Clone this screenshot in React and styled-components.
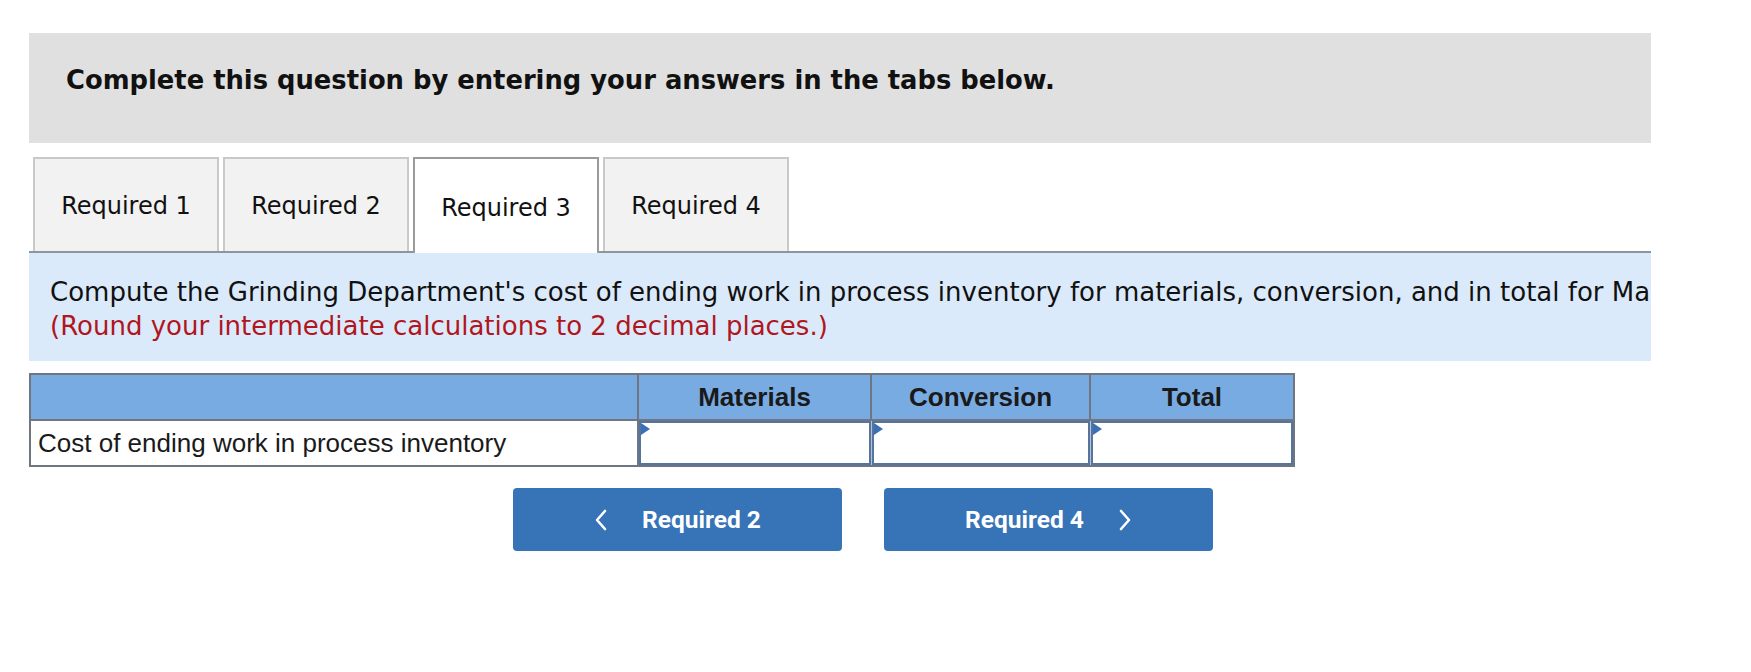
import React from "react";
import styled, { createGlobalStyle } from "styled-components";

const GlobalStyle = createGlobalStyle`
  html, body { margin: 0; padding: 0; background: #ffffff; }
  * { box-sizing: border-box; }
`;

const Page = styled.div`
  width: 1751px;
  padding: 33px 0 0 29px;
`;

const Frame = styled.div`
  width: 1622px;
`;

const Banner = styled.div`
  height: 110px;
  background: #e0e0e0;
  padding: 32px 0 0 37px;
  font-family: "DejaVu Sans", Verdana, sans-serif;
  font-weight: bold;
  font-size: 25.8px;
  line-height: 30px;
  color: #111;
  white-space: nowrap;
`;

const TabBar = styled.div`
  margin-top: 14px;
  display: flex;
  gap: 4px;
  padding-left: 4px;
  height: 96px;
  border-bottom: 2px solid #8f959b;
`;

const Tab = styled.div`
  width: 186px;
  height: ${(p) => (p.$active ? "96px" : "94px")};
  display: flex;
  align-items: center;
  justify-content: center;
  padding-top: ${(p) => (p.$active ? "4px" : "2px")};
  background: ${(p) => (p.$active ? "#ffffff" : "#f2f2f2")};
  border: 2px solid ${(p) => (p.$active ? "#9a9a9a" : "#c9c9c9")};
  border-bottom: none;
  font-family: "DejaVu Sans", Verdana, sans-serif;
  font-size: 24px;
  color: #111;
  position: relative;
  z-index: ${(p) => (p.$active ? 1 : 0)};
`;

const Info = styled.div`
  height: 108px;
  background: #dbeafa;
  padding: 22px 0 0 21px;
  overflow: hidden;
  white-space: nowrap;
  font-family: "DejaVu Sans", Verdana, sans-serif;
  font-size: 26px;
  line-height: 34px;
  color: #111;
`;

const Note = styled.div`
  color: #b0161d;
`;

const Table = styled.table`
  margin-top: 12px;
  border-collapse: collapse;
  width: 1264px;
  table-layout: fixed;
  border: 2px solid #6e7480;
  font-family: "Liberation Sans", Arial, sans-serif;
`;

const HeadCell = styled.th`
  height: 46px;
  background: #79abe3;
  border: 2px solid #6f7681;
  font-size: 26px;
  font-weight: bold;
  color: #1a1a1a;
  text-align: center;
  padding: 0;
`;

const LabelCell = styled.td`
  height: 46px;
  border: 2px solid #6f7681;
  padding: 1px 0 0 7px;
  font-size: 26px;
  color: #1a1a1a;
`;

const InputCell = styled.td`
  height: 46px;
  padding: 0;
  border: 1px solid #b9c2cc;
  border-top: 2px solid #6f7681;
`;

const InputBox = styled.div`
  position: relative;
  height: 44px;
  border: 2px solid #55759f;
  background: #fff;
`;

const Marker = styled.span`
  position: absolute;
  left: 0;
  top: 0;
  width: 0;
  height: 0;
  border-top: 6px solid transparent;
  border-bottom: 6px solid transparent;
  border-left: 9px solid #3b70b7;
`;

const Nav = styled.div`
  margin: 21px 0 0 484px;
  display: flex;
  gap: 42px;
`;

const NavButton = styled.button`
  width: 329px;
  height: 63px;
  border: none;
  border-radius: 4px;
  background: #3773b7;
  color: #fff;
  font-family: Roboto, "Liberation Sans", sans-serif;
  font-weight: bold;
  font-size: 24.5px;
  display: flex;
  align-items: center;
  justify-content: center;
  gap: 34px;
  padding: 0;
  cursor: pointer;
`;

const Chevron = ({ dir }) => (
  <svg width="14" height="24" viewBox="0 0 14 24" fill="none">
    <polyline
      points={dir === "left" ? "11,3 3,12 11,21" : "3,3 11,12 3,21"}
      stroke="#fff"
      strokeWidth="2.6"
      strokeLinecap="round"
      strokeLinejoin="round"
    />
  </svg>
);

const tabs = ["Required 1", "Required 2", "Required 3", "Required 4"];

export default function App() {
  return (
    <>
      <GlobalStyle />
      <Page>
        <Frame>
          <Banner>Complete this question by entering your answers in the tabs below.</Banner>
          <TabBar>
            {tabs.map((t, i) => (
              <Tab key={t} $active={i === 2}>
                {t}
              </Tab>
            ))}
          </TabBar>
          <Info>
            <div>
              Compute the Grinding Department's cost of ending work in process inventory for materials, conversion, and in total for May.
            </div>
            <Note>(Round your intermediate calculations to 2 decimal places.)</Note>
          </Info>
          <Table>
            <colgroup>
              <col style={{ width: 608 }} />
              <col style={{ width: 233 }} />
              <col style={{ width: 219 }} />
              <col style={{ width: 204 }} />
            </colgroup>
            <thead>
              <tr>
                <HeadCell />
                <HeadCell>Materials</HeadCell>
                <HeadCell>Conversion</HeadCell>
                <HeadCell>Total</HeadCell>
              </tr>
            </thead>
            <tbody>
              <tr>
                <LabelCell>Cost of ending work in process inventory</LabelCell>
                {[0, 1, 2].map((k) => (
                  <InputCell key={k}>
                    <InputBox>
                      <Marker />
                    </InputBox>
                  </InputCell>
                ))}
              </tr>
            </tbody>
          </Table>
          <Nav>
            <NavButton>
              <Chevron dir="left" />
              <span>Required 2</span>
            </NavButton>
            <NavButton>
              <span>Required 4</span>
              <Chevron dir="right" />
            </NavButton>
          </Nav>
        </Frame>
      </Page>
    </>
  );
}
